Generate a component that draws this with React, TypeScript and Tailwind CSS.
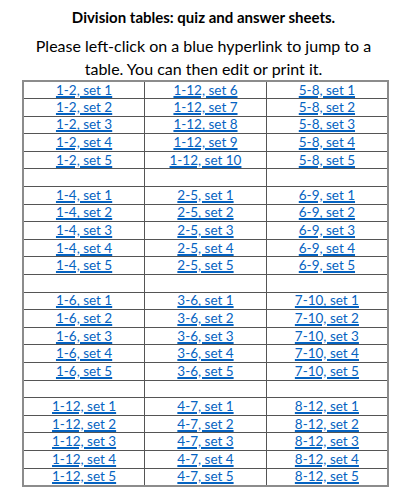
const groups: string[][] = [
  ['1-2', '1-12', '5-8'],
  ['1-4', '2-5', '6-9'],
  ['1-6', '3-6', '7-10'],
  ['1-12', '4-7', '8-12'],
];

// the first group's middle column starts at set 6
const setStart = (g: number, c: number) => (g === 0 && c === 1 ? 6 : 1);

export default function App() {
  const rows: (string[] | null)[] = [];
  groups.forEach((group, g) => {
    if (g > 0) rows.push(null);
    for (let i = 0; i < 5; i++) {
      rows.push(group.map((range, c) => `${range}, set ${setStart(g, c) + i}`));
    }
  });

  return (
    <div className="w-[407px] h-[500px] bg-white text-black" style={{ fontFamily: 'Lato, "Open Sans", sans-serif' }}>
      <h1 className="pt-[7px] text-center text-[15px] font-bold leading-[20px]">
        Division tables: quiz and answer sheets.
      </h1>
      <p className="mt-[7px] px-[30px] text-center text-[16px] leading-[23px]">
        Please left-click on a blue hyperlink to jump to a table. You can then edit or print it.
      </p>
      <table className="mx-[22px] w-[367px] table-fixed border-collapse border-2 border-[#8c8c8c]">
        <tbody>
          {rows.map((row, r) => (
            <tr key={r} className="h-[17.6px]">
              {(row ?? ['', '', '']).map((cell, c) => (
                <td key={c} className="border border-[#555] p-0 text-center align-middle text-[13.5px] leading-[15px]">
                  {cell && (
                    <a href="#" className="text-[#0563c1] underline decoration-[1.5px] underline-offset-[1px]">
                      {cell}
                    </a>
                  )}
                </td>
              ))}
            </tr>
          ))}
        </tbody>
      </table>
    </div>
  );
}
